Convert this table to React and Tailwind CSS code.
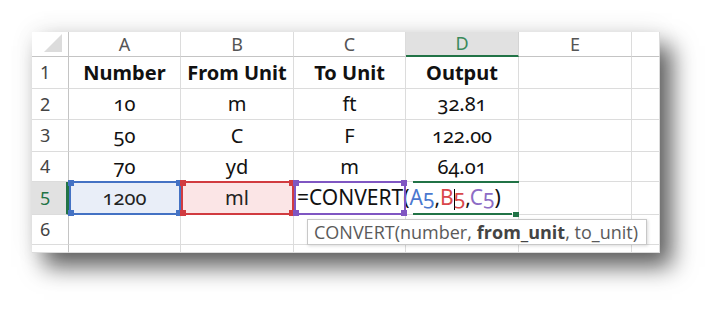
const colHeads = ['A', 'B', 'C', 'D', 'E', '']

const rows = [
  { n: '1', cells: ['Number', 'From Unit', 'To Unit', 'Output', '', ''], bold: true },
  { n: '2', cells: ['10', 'm', 'ft', '32.81', '', ''] },
  { n: '3', cells: ['50', 'C', 'F', '122.00', '', ''] },
  { n: '4', cells: ['70', 'yd', 'm', '64.01', '', ''] },
]

function RefBox({ line, dot }) {
  return (
    <div className={`pointer-events-none absolute left-0 top-[-1px] right-[-1px] bottom-[-1px] border-2 ${line}`}>
      <span className={`absolute -left-[3px] -top-[3px] w-[6px] h-[6px] ${dot}`} />
      <span className={`absolute -right-[3px] -top-[3px] w-[6px] h-[6px] ${dot}`} />
      <span className={`absolute -left-[3px] -bottom-[3px] w-[6px] h-[6px] ${dot}`} />
      <span className={`absolute -right-[3px] -bottom-[3px] w-[6px] h-[6px] ${dot}`} />
    </div>
  )
}

export default function App() {
  return (
    <div className="w-[725px] h-[319px] bg-white pt-[32px] pl-[32px] font-['Noto_Sans','Open_Sans',sans-serif] oldstyle-nums">
      <div className="relative w-[628px] h-[221px] bg-white shadow-[12px_14px_22px_rgba(0,0,0,0.62),0_-2px_24px_rgba(0,0,0,0.07)]">
        <div className="grid grid-cols-[37px_112px_113px_112px_113px_113px_28px] grid-rows-[25px_32px_31px_32px_30px_33px_30px_8px] overflow-hidden h-full">
          {/* column headers */}
          <div className="relative border-r border-b border-[#c4c4c4]">
            <svg className="absolute right-[6px] bottom-[4px]" width="18" height="18" viewBox="0 0 18 18">
              <polygon points="18,0 18,18 0,18" fill="#dcdcdc" />
            </svg>
          </div>
          {colHeads.map((c) =>
            c === 'D' ? (
              <div key={c} className="flex items-center justify-center bg-[#e1e1e1] border-r border-r-[#d4d4d4] border-b-2 border-b-[#217346] text-[18px] text-[#3b8a5c]">
                {c}
              </div>
            ) : (
              <div key={c || 'f'} className="flex items-center justify-center border-r border-b border-r-[#dcdcdc] border-b-[#c4c4c4] text-[18px] text-[#555]">
                {c}
              </div>
            )
          )}

          {/* rows 1-4 */}
          {rows.map((r) => (
            <div key={r.n} className="contents">
              <div className="flex items-center pl-[8px] border-r border-b border-r-[#c4c4c4] border-b-[#dcdcdc] text-[18px] text-[#444] normal-nums">
                {r.n}
              </div>
              {r.cells.map((v, i) => (
                <div
                  key={i}
                  className={`flex items-center justify-center border-r border-b border-[#dcdcdc] text-[20px] text-[#111] ${r.bold ? 'font-bold' : ''}`}
                >
                  {v}
                </div>
              ))}
            </div>
          ))}

          {/* row 5 */}
          <div className="flex items-center pl-[8px] bg-[#e1e1e1] border-r-[3px] border-r-[#217346] border-b border-b-[#dcdcdc] text-[18px] text-[#217346] normal-nums">
            5
          </div>
          <div className="relative flex items-center justify-center bg-[#e9eef8] border-r border-b border-[#dcdcdc] text-[20px] text-[#222]">
            1200
            <RefBox line="border-[#4472c4]" dot="bg-[#4472c4]" />
          </div>
          <div className="relative flex items-center justify-center bg-[#fbe5e6] border-r border-b border-[#dcdcdc] text-[20px] text-[#222]">
            ml
            <RefBox line="border-[#d13b40]" dot="bg-[#d13b40]" />
          </div>
          <div className="relative z-10 flex items-center pl-[3px] border-r border-b border-[#dcdcdc] text-[21px] text-[#111] whitespace-nowrap">
            <span>
              =CONVERT(<span className="text-[#4a78cf]">A5</span>,<span className="text-[#d9474b]">B</span>
              <span className="inline-block w-px h-[21px] bg-black align-middle -mr-px" />
              <span className="text-[#d9474b]">5</span>,<span className="text-[#8d6cc5]">C5</span>)
            </span>
            <RefBox line="border-[#7f56c2]" dot="bg-[#7f56c2]" />
          </div>
          <div className="relative border-r border-b border-[#dcdcdc]">
            <span className="absolute left-[7px] right-[-1px] top-[-1px] h-[2px] bg-[#217346]" />
            <span className="absolute left-[7px] right-[6px] bottom-[-1px] h-[2px] bg-[#217346]" />
            <span className="absolute right-[-1px] bottom-[-3px] w-[6px] h-[5px] bg-[#217346]" />
          </div>
          <div className="border-r border-b border-[#dcdcdc]" />
          <div className="border-r border-b border-[#dcdcdc]" />

          {/* rows 6-7 */}
          {['6', ''].map((n) => (
            <div key={n || 'x'} className="contents">
              <div className="flex items-center pl-[8px] border-r border-b border-r-[#c4c4c4] border-b-[#dcdcdc] text-[18px] text-[#444] normal-nums">
                {n}
              </div>
              {[0, 1, 2, 3, 4, 5].map((i) => (
                <div key={i} className="border-r border-b border-[#dcdcdc]" />
              ))}
            </div>
          ))}
        </div>

        {/* function tooltip */}
        <div className="absolute left-[275px] top-[187px] z-20 w-[340px] h-[26px] flex items-center pl-[6px] bg-white border border-[#c8c8c8] shadow-[1px_1px_3px_rgba(0,0,0,0.15)] text-[18px] text-[#5a5a5a] whitespace-nowrap font-['Open_Sans',sans-serif]">
          CONVERT(number, <span className="font-bold text-[#444] ml-[5px]">from_unit</span>, to_unit)
        </div>
      </div>
    </div>
  )
}
